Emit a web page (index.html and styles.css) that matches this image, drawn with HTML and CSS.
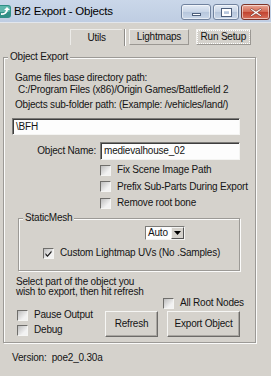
FILE: index.html
```html
<!DOCTYPE html>
<html>
<head>
<meta charset="utf-8">
<link rel="stylesheet" href="styles.css">
</head>
<body>
<div class="window">
  <div class="titlebar">
    <div class="app-icon">
      <svg width="11" height="13" viewBox="0 0 11 13"><rect x="-4" y="0" width="15" height="13" rx="3" fill="#2f8f86"/><rect x="-3" y="1" width="13" height="6" rx="2" fill="#5fb7ad"/><path d="M1 8 Q5 9 6 5 L4 5 L7 2 L10 5 L8 5 Q7 10 1 10 Z" fill="#fff"/></svg>
    </div>
    <div class="title">Bf2 Export - Objects</div>
    <div class="caption-btns">
      <div class="cbtn min"><span class="dash"></span></div>
      <div class="cbtn max"><span class="box"></span></div>
      <div class="cbtn close"><svg width="12" height="9" viewBox="0 0 12 9"><path d="M1.5 0.5 L6 3.3 L10.5 0.5 L11.5 1.8 L7.6 4.5 L11.5 7.2 L10.5 8.5 L6 5.7 L1.5 8.5 L0.5 7.2 L4.4 4.5 L0.5 1.8 Z" fill="#fff" stroke="#6a2a22" stroke-width="0.6"/></svg></div>
    </div>
  </div>
  <div class="client">
    <div class="toolbar">
      <div class="tbtn utils">Utils</div>
      <span class="tsep"></span>
      <div class="tbtn lightmaps">Lightmaps</div>
      <div class="tbtn runsetup"><span class="focus">Run Setup</span></div>
    </div>
    <fieldset class="group main">
      <legend>Object Export</legend>
      <div class="line first">Game files base directory path:</div>
      <div class="line path">C:/Program Files (x86)/Origin Games/Battlefield 2</div>
      <div class="line sub">Objects sub-folder path: (Example: /vehicles/land/)</div>
      <div class="textbox folder">\BFH</div>
      <div class="namerow">
        <span class="namelabel">Object Name:</span>
        <div class="textbox name">medievalhouse_02</div>
      </div>
      <div class="checks">
        <div class="check"><span class="cb"></span><span>Fix Scene Image Path</span></div>
        <div class="check"><span class="cb"></span><span>Prefix Sub-Parts During Export</span></div>
        <div class="check"><span class="cb"></span><span>Remove root bone</span></div>
      </div>
      <fieldset class="group mesh">
        <legend>StaticMesh</legend>
        <div class="combo"><span class="combo-val">Auto</span><span class="combo-btn"><svg width="7" height="4" viewBox="0 0 7 4"><path d="M0 0 H7 L3.5 4 Z" fill="#000"/></svg></span></div>
        <div class="check custom"><span class="cb checked"><svg width="9" height="9" viewBox="0 0 9 9"><path d="M1.5 4 L3.5 6.2 L7.5 1.5 L7.5 3.5 L3.5 8 L1.5 6 Z" fill="#1a1a1a"/></svg></span><span>Custom Lightmap UVs (No .Samples)</span></div>
      </fieldset>
      <div class="hint">Select part of the object you<br>wish to export, then hit refresh</div>
      <div class="bottom">
        <div class="leftcol">
          <div class="check small"><span class="cb"></span><span>Pause Output</span></div>
          <div class="check small"><span class="cb"></span><span>Debug</span></div>
        </div>
        <div class="rightcol">
          <div class="check small allroot"><span class="cb"></span><span>All Root Nodes</span></div>
          <div class="btnrow">
            <div class="btn refresh">Refresh</div>
            <div class="btn export">Export Object</div>
          </div>
        </div>
      </div>
    </fieldset>
    <div class="version">Version:&nbsp; poe2_0.30a</div>
  </div>
</div>
</body>
</html>
```

FILE: styles.css
```css
* { box-sizing: border-box; margin: 0; padding: 0; }
html, body { width: 271px; height: 376px; overflow: hidden; }
body {
  background: #d5d2cc;
  font-family: "Liberation Sans", Arial, sans-serif;
  font-size: 10px;
  letter-spacing: -0.2px;
  line-height: 12px;
  color: #141414;
}
.window { width: 271px; height: 376px; display: flex; flex-direction: column; background: #d5d2cc; }

/* title bar */
.titlebar {
  height: 23px;
  flex: none;
  display: flex;
  align-items: flex-start;
  background: linear-gradient(#cad7e9, #bfcde2);
  border-bottom: 1px solid #e2e6ec;
}
.app-icon { width: 11px; height: 13px; margin-top: 5px; }
.app-icon svg { display: block; }
.title {
  margin-left: 3px;
  margin-top: 5px;
  font-size: 11.5px;
  line-height: 13px;
  letter-spacing: -0.2px;
  color: #000;
}
.caption-btns { margin-left: auto; margin-top: 4px; margin-right: 1px; display: flex; gap: 2px; }
.cbtn {
  height: 16px;
  border: 1px solid #70829e;
  border-radius: 3px;
  display: flex;
  align-items: center;
  justify-content: center;
  background: linear-gradient(#e4ebf5, #c7d4e6 50%, #b6c6dc 51%, #c9d6e8);
  box-shadow: inset 0 0 0 1px rgba(255,255,255,0.55);
}
.min { width: 30px; }
.max { width: 26px; }
.close {
  width: 29px;
  border-color: #7d3328;
  background: linear-gradient(#e9a796, #d46a55 48%, #c2432f 52%, #d7715c);
}
.dash { width: 9px; height: 3px; background: #fff; border: 1px solid #4d5f7c; margin-top: 4px; }
.box { width: 9px; height: 7px; border: 2px solid #fff; outline: 1px solid #4d5f7c; }
.close svg { display: block; }

/* client */
.client { flex: 1; display: flex; flex-direction: column; }
.toolbar { display: flex; align-items: center; padding: 6px 20px 0 70px; height: 22px; }
.tbtn {
  height: 16px;
  display: flex;
  align-items: center;
  justify-content: center;
  color: #111;
}
.utils { width: 53px; border-top: 1px solid #ecebe8; border-left: 1px solid #ecebe8; }
.tsep { width: 2px; height: 17px; margin: 0 3px 0 2px; border-left: 1px solid #8e8c88; border-right: 1px solid #fff; }
.lightmaps { width: 60px; border: 1px solid; border-color: #f2f1ee #9b9893 #9b9893 #f2f1ee; }
.runsetup { width: 56px; margin-left: 7px; border: 1px solid; border-color: #f2f1ee #9b9893 #9b9893 #f2f1ee; padding: 1px; }
.focus { display: flex; align-items: center; justify-content: center; width: 100%; height: 100%; outline: 1px dotted #fff; }

/* group boxes */
.group {
  border: 1px solid #9c9a96;
  box-shadow: inset 1px 1px 0 #fbfbfa, 1px 1px 0 #fbfbfa;
}
.group legend {
  padding: 0 2px;
  margin-left: 4px;
  line-height: 12px;
  background: #d5d2cc;
}
.main { margin: 6px 0 0 3px; width: 253px; height: 292px; padding: 0; }
.line { white-space: nowrap; }
.first { margin: 9px 0 0 11px; }
.path { margin-left: 14px; }
.sub { margin: 3px 0 0 11px; }

.textbox {
  background: #fdfdfd;
  border: 1px solid;
  border-color: #7c7b78 #f4f4f2 #f4f4f2 #7c7b78;
  box-shadow: inset 1px 1px 0 #3e3e3e;
  padding-left: 3px;
  display: flex;
  align-items: center;
}
.folder { margin: 7px 0 0 8px; width: 228px; height: 17px; }
.namerow { display: flex; align-items: center; margin-top: 7px; }
.namelabel { width: 96px; text-align: right; padding-right: 4px; }
.name { width: 140px; height: 18px; }

.checks { margin: 2px 0 0 96px; display: flex; flex-direction: column; gap: 0.5px; }
.check { display: flex; align-items: center; height: 16px; white-space: nowrap; }
.cb {
  width: 11px;
  height: 11px;
  flex: none;
  margin-right: 6px;
  border: 1px solid;
  border-color: #6f6e6b #f5f5f3 #f5f5f3 #6f6e6b;
  background: linear-gradient(135deg, #bdbdbd, #f2f2f2 70%);
  display: flex;
  align-items: center;
  justify-content: center;
}
.cb svg { display: block; }

.mesh { margin: 1px 0 0 14px; width: 222px; height: 59px; padding: 0; }
.combo {
  margin: 2px 0 0 126px;
  width: 40px;
  height: 14px;
  display: flex;
  background: #fdfdfd;
  border: 1px solid;
  border-color: #7c7b78 #f4f4f2 #f4f4f2 #7c7b78;
}
.combo-val { flex: 1; padding-left: 2px; line-height: 12px; }
.combo-btn {
  width: 13px;
  background: #d5d2cc;
  border: 1px solid;
  border-color: #f4f4f2 #555 #555 #f4f4f2;
  display: flex;
  align-items: center;
  justify-content: center;
}
.combo-btn svg { display: block; }
.custom { margin: 5px 0 0 24px; }

.hint { margin: 6px 0 0 12px; line-height: 10px; white-space: nowrap; }
.bottom { display: flex; }
.leftcol { width: 101px; padding: 12px 0 0 13px; display: flex; flex-direction: column; gap: 3px; }
.small { height: 12px; }
.rightcol { display: flex; flex-direction: column; }
.allroot { margin-left: 58px; }
.btnrow { display: flex; gap: 9px; margin-top: 2px; }
.btn {
  height: 26px;
  display: flex;
  align-items: center;
  justify-content: center;
  border: 1px solid;
  border-color: #f6f6f4 #6d6b68 #6d6b68 #f6f6f4;
  box-shadow: inset -1px -1px 0 #a9a6a1;
}
.refresh { width: 53px; }
.export { width: 73px; }

.version { margin: 9px 0 0 12px; white-space: nowrap; }
```
